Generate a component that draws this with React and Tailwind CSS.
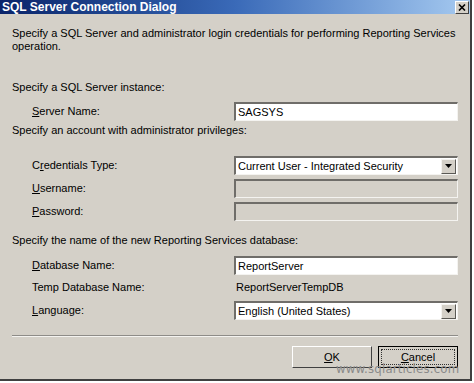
import { useState } from "react";

const font = { fontFamily: '"Liberation Sans", Arial, sans-serif' };

function U({ children }) {
  return <span className="underline underline-offset-[1px]">{children}</span>;
}

function Sunken({ children, disabled }) {
  return (
    <div
      className={`h-[19px] w-[224px] border-t-2 border-l-2 border-t-[#6f6d69] border-l-[#6f6d69] border-b border-r border-b-[#f4f3f0] border-r-[#f4f3f0] flex items-center ${
        disabled ? "bg-[#d4d0c8]" : "bg-white"
      }`}
    >
      {children}
    </div>
  );
}

function Select({ value }) {
  return (
    <Sunken>
      <span className="flex-1 pl-[2px] text-[11px] text-black">{value}</span>
      <div className="w-[15px] h-[15px] mr-[1px] bg-[#d4d0c8] border border-t-[#f4f3f0] border-l-[#f4f3f0] border-b-[#5a5955] border-r-[#5a5955] flex items-center justify-center">
        <svg width="7" height="4" viewBox="0 0 7 4">
          <path d="M0 0h7L3.5 4z" fill="#000" />
        </svg>
      </div>
    </Sunken>
  );
}

function Row({ label, children, className = "" }) {
  return (
    <div className={`flex items-center h-[19px] ${className}`}>
      <div className="w-[222px] pl-[20px] text-[11px] text-black">{label}</div>
      {children}
    </div>
  );
}

export default function App() {
  const [server, setServer] = useState("SAGSYS");
  const [db, setDb] = useState("ReportServer");

  return (
    <div className="w-[474px] h-[383px] bg-white overflow-hidden relative" style={font}>
      <div className="w-[472px] h-[381px] bg-[#d4d0c8] border-r-2 border-b-2 border-[#404040] flex flex-col">
        {/* barra de titulo */}
        <div className="h-[14px] flex items-center justify-between bg-gradient-to-r from-[#0a246a] via-[#3a6ab8] to-[#a6caf0]">
          <span className="pl-[2px] text-[12px] font-bold text-white leading-none">
            SQL Server Connection Dialog
          </span>
          <div className="w-[14px] h-[13px] mr-[1px] bg-[#d4d0c8] border border-t-white border-l-white border-b-[#404040] border-r-[#404040] flex items-center justify-center">
            <svg width="8" height="7" viewBox="0 0 8 7">
              <path d="M1 0.5l6 6M7 0.5l-6 6" stroke="#000" strokeWidth="1.6" />
            </svg>
          </div>
        </div>

        <div className="flex flex-col pl-[12px] pt-[13px] text-[11px] text-black leading-[13px]">
          <p>
            Specify a SQL Server and administrator login credentials for performing Reporting Services
            <br />
            operation.
          </p>

          <p className="mt-[28px]">Specify a SQL Server instance:</p>
          <Row className="mt-[8px]" label={<><U>S</U>erver Name:</>}>
            <Sunken>
              <input
                value={server}
                onChange={(e) => setServer(e.target.value)}
                className="w-full pl-[2px] bg-transparent outline-none text-[11px]"
              />
            </Sunken>
          </Row>

          <p className="mt-[3px]">Specify an account with administrator privileges:</p>
          <Row className="mt-[19px]" label={<>C<U>r</U>edentials Type:</>}>
            <Select value="Current User - Integrated Security" />
          </Row>
          <Row className="mt-[4px]" label={<><U>U</U>sername:</>}>
            <Sunken disabled />
          </Row>
          <Row className="mt-[4px]" label={<><U>P</U>assword:</>}>
            <Sunken disabled />
          </Row>

          <p className="mt-[13px]">Specify the name of the new Reporting Services database:</p>
          <Row className="mt-[9px]" label={<><U>D</U>atabase Name:</>}>
            <Sunken>
              <input
                value={db}
                onChange={(e) => setDb(e.target.value)}
                className="w-full pl-[2px] bg-transparent outline-none text-[11px]"
              />
            </Sunken>
          </Row>
          <Row className="mt-[3px]" label="Temp Database Name:">
            <span className="pl-[2px]">ReportServerTempDB</span>
          </Row>
          <Row className="mt-[4px]" label={<><U>L</U>anguage:</>}>
            <Select value="English (United States)" />
          </Row>

          {/* separador */}
          <div className="mt-[15px] w-[446px] border-t border-t-[#8e8c88] border-b border-b-[#f4f3f0]" />

          <div className="mt-[9px] w-[446px] flex justify-end gap-[6px]">
            <button className="w-[80px] h-[22px] bg-[#d4d0c8] border border-t-white border-l-white border-b-[#404040] border-r-[#404040] text-[11px]">
              <U>O</U>K
            </button>
            <button className="w-[80px] h-[22px] bg-[#d4d0c8] border border-black flex items-center justify-center">
              <span className="w-[74px] h-[16px] border border-dotted border-[#303030] flex items-center justify-center text-[11px]">
                <U>C</U>ancel
              </span>
            </button>
          </div>
        </div>
      </div>

      {/* marca de agua */}
      <span
        className="absolute left-[336px] top-[362px] text-[13px] tracking-[0.2px] text-[#8a8a8a] leading-none whitespace-nowrap"
        style={{ fontFamily: '"DejaVu Sans Condensed", "DejaVu Sans", sans-serif' }}
      >
        www.sqlarticles.com
      </span>
    </div>
  );
}
